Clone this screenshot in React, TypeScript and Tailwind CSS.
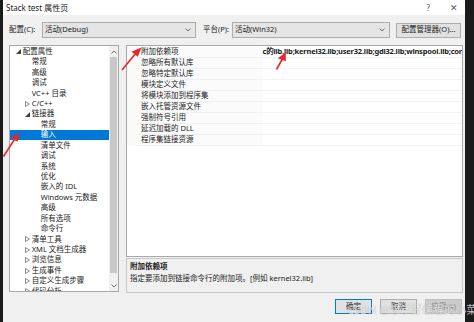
import React from "react";

type Node = { label: string; level: number; exp?: "open" | "closed"; selected?: boolean };

const tree: Node[] = [
  { label: "配置属性", level: 0, exp: "open" },
  { label: "常规", level: 1 },
  { label: "高级", level: 1 },
  { label: "调试", level: 1 },
  { label: "VC++ 目录", level: 1 },
  { label: "C/C++", level: 1, exp: "closed" },
  { label: "链接器", level: 1, exp: "open" },
  { label: "常规", level: 2 },
  { label: "输入", level: 2, selected: true },
  { label: "清单文件", level: 2 },
  { label: "调试", level: 2 },
  { label: "系统", level: 2 },
  { label: "优化", level: 2 },
  { label: "嵌入的 IDL", level: 2 },
  { label: "Windows 元数据", level: 2 },
  { label: "高级", level: 2 },
  { label: "所有选项", level: 2 },
  { label: "命令行", level: 2 },
  { label: "清单工具", level: 1, exp: "closed" },
  { label: "XML 文档生成器", level: 1, exp: "closed" },
  { label: "浏览信息", level: 1, exp: "closed" },
  { label: "生成事件", level: 1, exp: "closed" },
  { label: "自定义生成步骤", level: 1, exp: "closed" },
  { label: "代码分析", level: 1, exp: "closed" },
];

const props = [
  "附加依赖项",
  "忽略所有默认库",
  "忽略特定默认库",
  "模块定义文件",
  "将模块添加到程序集",
  "嵌入托管资源文件",
  "强制符号引用",
  "延迟加载的 DLL",
  "程序集链接资源",
];

const padByLevel = ["pl-[4px]", "pl-[13px]", "pl-[22px]"];

const Expander = ({ exp, light }: { exp?: "open" | "closed"; light?: boolean }) => (
  <span className="w-[8.7px] h-full flex items-center justify-center shrink-0">
    {exp === "open" && (
      <svg width="5" height="5" viewBox="0 0 5 5">
        <path d="M5 0 L5 5 L0 5 Z" fill={light ? "#fff" : "#404040"} />
      </svg>
    )}
    {exp === "closed" && (
      <svg width="5" height="6" viewBox="0 0 5 6">
        <path d="M0.5 0.5 L4.5 3 L0.5 5.5 Z" fill="none" stroke="#707070" strokeWidth="0.8" />
      </svg>
    )}
  </span>
);

const Chevron = ({ up }: { up?: boolean }) => (
  <svg width="6" height="4" viewBox="0 0 6 4">
    <path d={up ? "M0.5 3.5 L3 1 L5.5 3.5" : "M0.5 0.5 L3 3 L5.5 0.5"} fill="none" stroke="#606060" strokeWidth="0.9" />
  </svg>
);

const Combo = ({ text, w }: { text: string; w: string }) => (
  <div className={`${w} h-[16px] bg-[#e5e5e5] border border-[#acacac] flex items-center justify-between pl-[2px] pr-[4px]`}>
    <span>{text}</span>
    <Chevron />
  </div>
);

export default function App() {
  return (
    <div className="w-[474px] h-[322px] bg-[#1b1b1b] flex relative overflow-hidden font-['Noto_Sans','Noto_Sans_CJK_SC',sans-serif] text-[7.5px] text-[#222] leading-none">
      {/* dialog */}
      <div className="ml-[3px] w-[462px] h-full bg-[#f0f0f0] flex flex-col">
        {/* title bar */}
        <div className="h-[15px] bg-white flex items-center justify-between pl-[3px] pr-[7px] text-[8px]">
          <span>Stack test 属性页</span>
          <div className="flex items-center gap-[20px] text-[#555]">
            <span>?</span>
            <span className="text-[9px]">✕</span>
          </div>
        </div>

        {/* config row */}
        <div className="flex items-center mt-[7px] h-[16px] pl-[6px]">
          <span className="w-[33px]">配置(C):</span>
          <Combo text="活动(Debug)" w="w-[154px]" />
          <span className="ml-[7px] w-[29px]">平台(P):</span>
          <Combo text="活动(Win32)" w="w-[158px]" />
          <div className="ml-[6px] w-[65px] h-[15px] bg-[#e1e1e1] border border-[#adadad] flex items-center justify-center">
            配置管理器(O)...
          </div>
        </div>

        {/* content */}
        <div className="flex mt-[7px] pl-[6px] h-[248px]">
          {/* tree */}
          <div className="w-[110px] h-[247px] bg-white border border-[#a8a8a8] flex overflow-hidden">
            <div className="flex-1 pt-[0.5px] overflow-hidden">
              {tree.map((n, i) => (
                <div
                  key={i}
                  className={`h-[10.43px] flex items-center whitespace-nowrap ${padByLevel[n.level]} ${
                    n.selected ? "bg-[#0078d7] text-white" : ""
                  }`}
                >
                  <Expander exp={n.exp} light={n.selected} />
                  <span>{n.label}</span>
                </div>
              ))}
            </div>
            <div className="w-[9px] bg-[#f0f0f0] flex flex-col items-center">
              <div className="h-[11px] flex items-center">
                <Chevron up />
              </div>
              <div className="w-[7px] h-[216px] bg-[#c8c8c8]" />
              <div className="flex-1 flex items-end pb-[3px]">
                <Chevron />
              </div>
            </div>
          </div>

          {/* right side */}
          <div className="ml-[7px] w-[337px] flex flex-col">
            <div className="h-[212px] bg-white border border-[#a8a8a8] overflow-hidden">
              <div className="pt-[0.5px]">
                {props.map((p, i) => (
                  <div key={i} className="h-[11px] flex">
                    <div className="w-[10px] bg-[#fafafa]" />
                    <div className="w-[126px] bg-[#fbfbfc] border-b border-[#f0f0f2] flex items-center pl-[4px]">
                      {p}
                    </div>
                    <div className="flex-1 border-b border-[#f3f3f3] flex items-center pl-[1px] whitespace-nowrap font-bold tracking-[-0.2px]">
                      {i === 0 ? "c的lib.lib;kernel32.lib;user32.lib;gdi32.lib;winspool.lib;cor" : ""}
                    </div>
                  </div>
                ))}
              </div>
            </div>
            <div className="mt-[1px] h-[35px] border border-[#c8c8c8] bg-[#f0f0f0] pl-[3px] pt-[4px] flex flex-col gap-[4px]">
              <span className="font-bold">附加依赖项</span>
              <span>指定要添加到链接命令行的附加项。[例如 kernel32.lib]</span>
            </div>
          </div>
        </div>

        {/* buttons */}
        <div className="flex justify-end gap-[8px] pr-[3px] mt-[6px]">
          <div className="w-[37px] h-[15px] bg-[#e1e1e1] border border-[#0078d7] flex items-center justify-center">确定</div>
          <div className="w-[37px] h-[15px] bg-[#e1e1e1] border border-[#adadad] flex items-center justify-center">取消</div>
          <div className="w-[37px] h-[15px] bg-[#cccccc] border border-[#bfbfbf] text-[#838383] flex items-center justify-center">应用(A)</div>
        </div>
      </div>

      {/* annotation arrows */}
      <svg className="absolute left-0 top-0 pointer-events-none" width="474" height="322">
        <g stroke="#e8262b" strokeWidth="1.6" fill="#e8262b">
          <line x1="122" y1="70" x2="136" y2="53" />
          <path d="M140 49 L133 52 L137.5 55.5 Z" />
          <line x1="276.5" y1="69.5" x2="283" y2="58" />
          <path d="M285 54 L279.5 58 L285 60 Z" />
          <line x1="3.5" y1="156.5" x2="15" y2="138.5" />
          <path d="M18.5 134.5 L12 138 L17 140.5 Z" />
        </g>
      </svg>

      {/* watermark */}
      <div className="absolute left-[347px] top-[304px] text-[11px] text-white/75 whitespace-nowrap [text-shadow:0_0_1px_rgba(0,0,0,0.35)]">
        CSDN @想学好编程的小菜鸟
      </div>
    </div>
  );
}
